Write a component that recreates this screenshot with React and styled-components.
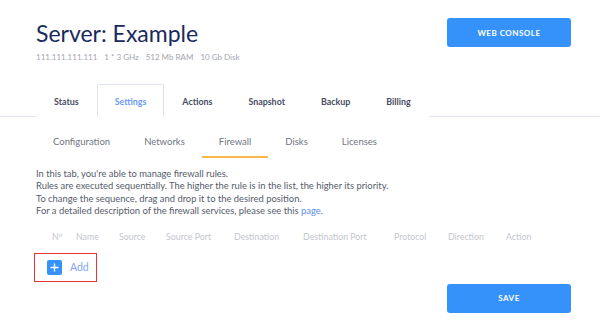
import React, { useState } from "react";
import styled, { createGlobalStyle } from "styled-components";

const GlobalStyle = createGlobalStyle`
  body {
    margin: 0;
    background: #ffffff;
    font-family: Lato, "Open Sans", sans-serif;
  }
`;

const tabs = ["Status", "Settings", "Actions", "Snapshot", "Backup", "Billing"];
const subTabs = ["Configuration", "Networks", "Firewall", "Disks", "Licenses"];

// column widths of the firewall rule table
const columns = [
  { name: "Nº", width: 24 },
  { name: "Name", width: 43 },
  { name: "Source", width: 47 },
  { name: "Source Port", width: 68 },
  { name: "Destination", width: 69 },
  { name: "Destination Port", width: 91 },
  { name: "Protocol", width: 54 },
  { name: "Direction", width: 58 },
  { name: "Action", width: 60 },
];

const Page = styled.div`
  width: 600px;
  height: 326px;
  overflow: hidden;
`;

const Header = styled.div`
  display: flex;
  justify-content: space-between;
  align-items: flex-start;
  padding: 18px 29px 0 36px;
`;

const TitleBlock = styled.div`
  margin-top: 1px;
`;

const Title = styled.h1`
  margin: 0;
  font-size: 23px;
  line-height: 28px;
  font-weight: 400;
  color: #1b2a5c;
`;

const Specs = styled.div`
  display: flex;
  gap: 7px;
  margin-top: 4px;
  font-size: 8px;
  line-height: 12px;
  color: #a2a6ae;
`;

const BlueButton = styled.button`
  width: 124px;
  height: 29px;
  border: none;
  border-radius: 3px;
  background: #3592fa;
  color: #ffffff;
  font-family: Lato, sans-serif;
  font-size: 8px;
  font-weight: 700;
  letter-spacing: 0.5px;
  text-transform: uppercase;
  cursor: pointer;
`;

const TabBar = styled.div`
  display: flex;
  margin-top: 21px;
  padding-left: 36px;
  border-bottom: 1px solid #dfe4ef;
`;

const Tab = styled.div`
  height: 33px;
  padding: 0 17px;
  box-sizing: border-box;
  display: flex;
  align-items: center;
  font-size: 8.9px;
  font-weight: 700;
  color: ${(p) => (p.$active ? "#6d9bf2" : "#474c63")};
  border: 1px solid ${(p) => (p.$active ? "#dfe4ef" : "transparent")};
  border-bottom: none;
  border-radius: 2px 2px 0 0;
  margin-bottom: -1px;
  background: #ffffff;
  cursor: pointer;
`;

const SubTabBar = styled.div`
  display: flex;
  padding-left: 36px;
`;

const SubTab = styled.div`
  height: 41px;
  padding: 19px 17px 0;
  box-sizing: border-box;
  font-size: 9.5px;
  line-height: 12px;
  color: #70757f;
  border-bottom: 2px solid ${(p) => (p.$active ? "#f8b94c" : "transparent")};
  cursor: pointer;
`;

const Content = styled.div`
  padding: 10px 29px 0 36px;
`;

const Description = styled.p`
  margin: 0;
  font-size: 9.4px;
  line-height: 12.4px;
  color: #565c6b;
`;

const Link = styled.a`
  color: #5b8def;
  text-decoration: none;
`;

const TableHead = styled.div`
  display: flex;
  margin-top: 13px;
  padding-left: 16px;
`;

const HeadCell = styled.div`
  flex: 0 0 ${(p) => p.$w}px;
  font-size: 8.8px;
  line-height: 12px;
  color: #c3c6cd;
  white-space: nowrap;
`;

const AddButton = styled.button`
  display: flex;
  align-items: center;
  gap: 8px;
  width: 63px;
  height: 29px;
  margin: 10px 0 0 -2px;
  padding: 0 0 0 12px;
  box-sizing: border-box;
  border: 1.5px solid #e4343a;
  background: #ffffff;
  font-family: Lato, sans-serif;
  font-size: 10.5px;
  color: #7ea6f2;
  cursor: pointer;
`;

const PlusIcon = styled.span`
  width: 15px;
  height: 15px;
  border-radius: 2px;
  background: #3592fa;
  display: flex;
  align-items: center;
  justify-content: center;
`;

const Footer = styled.div`
  display: flex;
  justify-content: flex-end;
  margin-top: 2px;
`;

export default function App() {
  const [tab, setTab] = useState("Settings");
  const [subTab, setSubTab] = useState("Firewall");

  return (
    <Page>
      <GlobalStyle />
      <Header>
        <TitleBlock>
          <Title>Server: Example</Title>
          <Specs>
            <span>111.111.111.111</span>
            <span>1 * 3 GHz</span>
            <span>512 Mb RAM</span>
            <span>10 Gb Disk</span>
          </Specs>
        </TitleBlock>
        <BlueButton>Web console</BlueButton>
      </Header>

      <TabBar>
        {tabs.map((t) => (
          <Tab key={t} $active={t === tab} onClick={() => setTab(t)}>
            {t}
          </Tab>
        ))}
      </TabBar>

      <SubTabBar>
        {subTabs.map((t) => (
          <SubTab key={t} $active={t === subTab} onClick={() => setSubTab(t)}>
            {t}
          </SubTab>
        ))}
      </SubTabBar>

      <Content>
        <Description>
          In this tab, you're able to manage firewall rules.
          <br />
          Rules are executed sequentially. The higher the rule is in the list, the higher its priority.
          <br />
          To change the sequence, drag and drop it to the desired position.
          <br />
          For a detailed description of the firewall services, please see this <Link href="#">page</Link>.
        </Description>

        <TableHead>
          {columns.map((c) => (
            <HeadCell key={c.name} $w={c.width}>
              {c.name}
            </HeadCell>
          ))}
        </TableHead>

        <AddButton>
          <PlusIcon>
            <svg width="9" height="9" viewBox="0 0 9 9">
              <path d="M4.5 0.5v8M0.5 4.5h8" stroke="#fff" strokeWidth="1.4" />
            </svg>
          </PlusIcon>
          Add
        </AddButton>

        <Footer>
          <BlueButton>Save</BlueButton>
        </Footer>
      </Content>
    </Page>
  );
}
